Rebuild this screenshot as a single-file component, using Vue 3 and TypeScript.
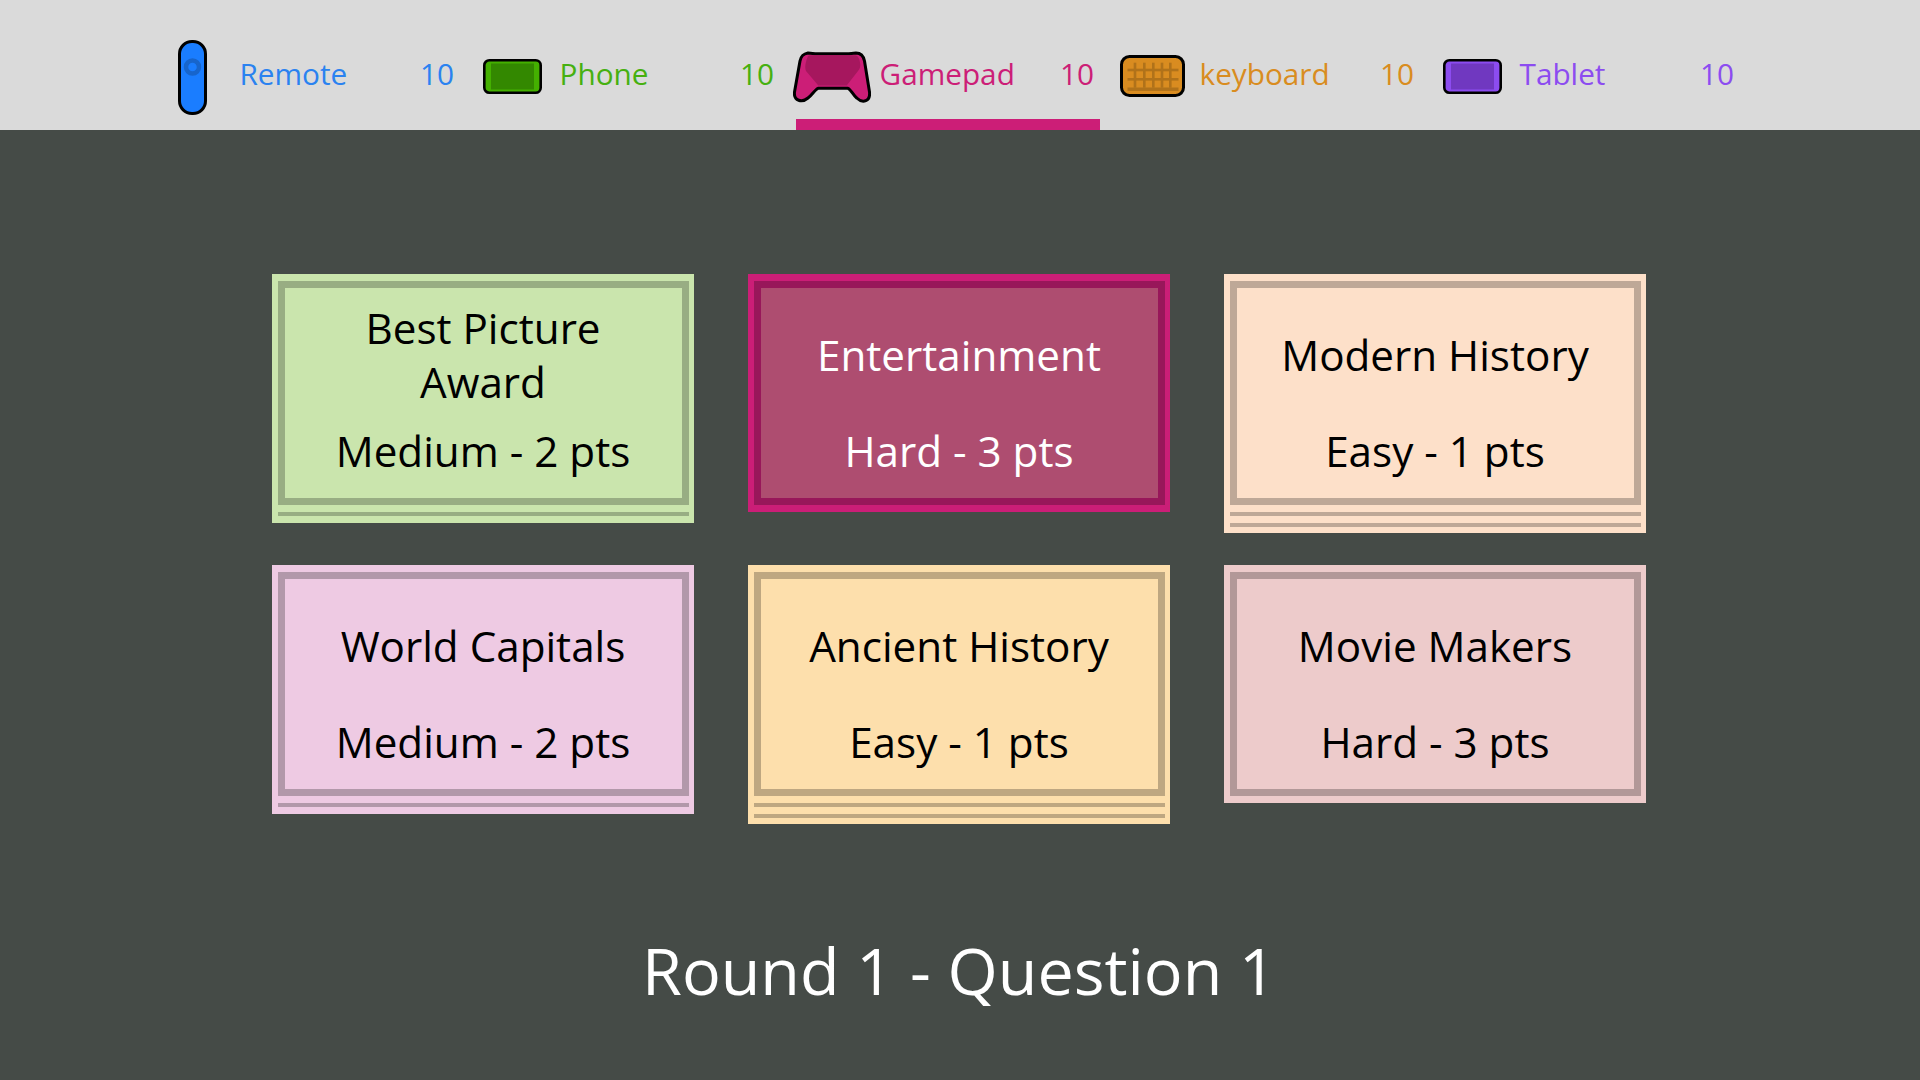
<script setup lang="ts">
interface Player {
  name: string
  score: number
  kind: string
  active?: boolean
}
interface Card {
  title: string
  level: string
  tone: string
  extra: number
}
const players: Player[] = [
  { name: 'Remote', score: 10, kind: 'remote' },
  { name: 'Phone', score: 10, kind: 'phone' },
  { name: 'Gamepad', score: 10, kind: 'gamepad', active: true },
  { name: 'keyboard', score: 10, kind: 'keyboard' },
  { name: 'Tablet', score: 10, kind: 'tablet' },
]
const cards: Card[] = [
  { title: 'Best Picture Award', level: 'Medium - 2 pts', tone: 'green', extra: 1 },
  { title: 'Entertainment', level: 'Hard - 3 pts', tone: 'magenta', extra: 0 },
  { title: 'Modern History', level: 'Easy - 1 pts', tone: 'peach', extra: 2 },
  { title: 'World Capitals', level: 'Medium - 2 pts', tone: 'pink', extra: 1 },
  { title: 'Ancient History', level: 'Easy - 1 pts', tone: 'sand', extra: 2 },
  { title: 'Movie Makers', level: 'Hard - 3 pts', tone: 'rose', extra: 0 },
]
const vLines = [13.7, 23, 32, 40.7, 49]
</script>

<template>
  <div class="page">
    <header class="bar">
      <div v-for="p in players" :key="p.kind" class="player" :class="[p.kind, { active: p.active }]">
        <div class="icon">
          <svg v-if="p.kind === 'remote'" width="29" height="75" viewBox="0 0 29 75">
            <rect x="1.5" y="1.5" width="26" height="72" rx="12.5" fill="#1a7dff" stroke="#000" stroke-width="3" />
            <circle cx="14.5" cy="27" r="6.5" fill="none" stroke="#1765cc" stroke-width="4.5" />
          </svg>
          <svg v-else-if="p.kind === 'phone'" width="59" height="35" viewBox="0 0 59 35">
            <rect x="1.3" y="1.3" width="56.4" height="32.4" rx="5" fill="#44b000" stroke="#000" stroke-width="2.6" />
            <rect x="8" y="4.5" width="43" height="26" fill="#338800" />
          </svg>
          <svg v-else-if="p.kind === 'gamepad'" width="78" height="52" viewBox="0 0 78 52">
            <path d="M15 2L22 2.800H56L63 2C68 2 70.500 5 71.500 10L76.500 41C77.500 50 70 53 63.700 47C60 44 58 38.500 55 37.300H25C22 38.500 19 44 15 47C9 52 0.500 50 1.500 41L7 10C8 5 10 3 15 2Z" fill="#cc1e77" stroke="#000" stroke-width="3" stroke-linejoin="round" />
            <path d="M17 4.200H62C65 4.200 67 8 67.300 14C67.300 17 66 19 65 20L53.700 34.500H25.300L13 20C12 18 12 14 13 11C14 7 15 4.200 17 4.200Z" fill="#a6175e" />
          </svg>
          <svg v-else-if="p.kind === 'keyboard'" width="65" height="42" viewBox="0 0 65 42">
            <rect x="1.500" y="1.500" width="62" height="39" rx="8" fill="#d98c20" stroke="#000" stroke-width="3" />
            <g fill="#b0721a">
              <rect x="7.500" y="13.700" width="51" height="2.600" />
              <rect x="7.500" y="23" width="51" height="2.600" />
              <rect x="7.500" y="32.500" width="51" height="3.400" />
              <rect v-for="x in vLines" :key="x" :x="x" y="7.700" width="2.600" height="25" />
            </g>
          </svg>
          <svg v-else width="59" height="35" viewBox="0 0 59 35">
            <rect x="1.300" y="1.300" width="56.400" height="32.400" rx="5" fill="#8c4cf0" stroke="#000" stroke-width="2.600" />
            <rect x="8" y="4.500" width="43" height="26" fill="#7038c0" />
          </svg>
        </div>
        <span class="name">{{ p.name }}</span>
        <span class="score">{{ p.score }}</span>
      </div>
    </header>

    <main class="board">
      <div class="grid">
        <article v-for="c in cards" :key="c.title" class="card" :class="c.tone">
          <div class="box">
            <div class="title"><span>{{ c.title }}</span></div>
            <div class="level">{{ c.level }}</div>
          </div>
          <div v-for="n in c.extra" :key="n" class="edge"></div>
        </article>
      </div>
      <h1 class="round">Round 1 - Question 1</h1>
    </main>
  </div>
</template>

<style>
html,
body {
  margin: 0;
  background: #454b47;
  overflow: hidden;
}
</style>

<style scoped>
.page {
  width: 1920px;
  height: 1080px;
  background: #454b47;
  font-family: "Open Sans", sans-serif;
  display: flex;
  flex-direction: column;
}
.bar {
  height: 130px;
  background: #dadada;
  display: flex;
  gap: 16px;
  padding-left: 156px;
  box-sizing: border-box;
}
.player {
  width: 304px;
  height: 130px;
  box-sizing: border-box;
  padding: 33px 6px 0 0;
  border-bottom: 11px solid transparent;
  display: flex;
  align-items: center;
  font-size: 29.76px;
}
.player.active {
  border-bottom-color: #cc1e77;
}
.icon {
  width: 72px;
  flex: none;
  margin-right: 11.5px;
  display: flex;
  justify-content: center;
}
.icon svg {
  flex: none;
  display: block;
}
.gamepad .icon svg,
.remote .icon svg {
  margin-top: 2px;
}
.name,
.score {
  position: relative;
  top: -3px;
}
.name {
  flex: 1;
}
.remote { color: #2a82f0; }
.phone { color: #46b010; }
.gamepad { color: #cc1e77; }
.keyboard { color: #d98c20; }
.tablet { color: #8c4cf0; }

.board {
  flex: 1;
  padding: 144px 0 0 272px;
}
.grid {
  display: grid;
  grid-template-columns: repeat(3, 422px);
  grid-template-rows: 259px 258px;
  column-gap: 54px;
  row-gap: 32px;
  align-items: start;
}
.card {
  --fill: #fff;
  --line: #000;
  background: var(--fill);
  padding: 7px 5px 7px 6px;
  color: #000;
}
.box {
  box-sizing: border-box;
  height: 224px;
  border: 7px solid var(--line);
  padding: 13px 1px 0 0;
  text-align: center;
  font-size: 42.2px;
  line-height: 54px;
}
.title {
  height: 108px;
  display: flex;
  align-items: center;
  justify-content: center;
  padding: 0 40px;
}
.level {
  margin-top: 15px;
}
.edge {
  height: 4px;
  margin-top: 7px;
  background: var(--line);
}
.edge + .edge {
  margin-bottom: -1px;
}
.green { --fill: #cae5ad; --line: #98ad83; }
.peach { --fill: #fde0c9; --line: #bea897; }
.pink { --fill: #eecae3; --line: #b298aa; }
.sand { --fill: #fddfac; --line: #bea781; }
.rose { --fill: #edcbcb; --line: #b29898; }
.magenta {
  background: #cb1e77;
  color: #fff;
}
.magenta .box {
  background: #ae4d70;
  border-color: #98175a;
}
.round {
  margin: 104px 0 0;
  width: 1374px;
  text-align: center;
  color: #fff;
  font-size: 64.6px;
  font-weight: 400;
  line-height: 87px;
}
</style>
